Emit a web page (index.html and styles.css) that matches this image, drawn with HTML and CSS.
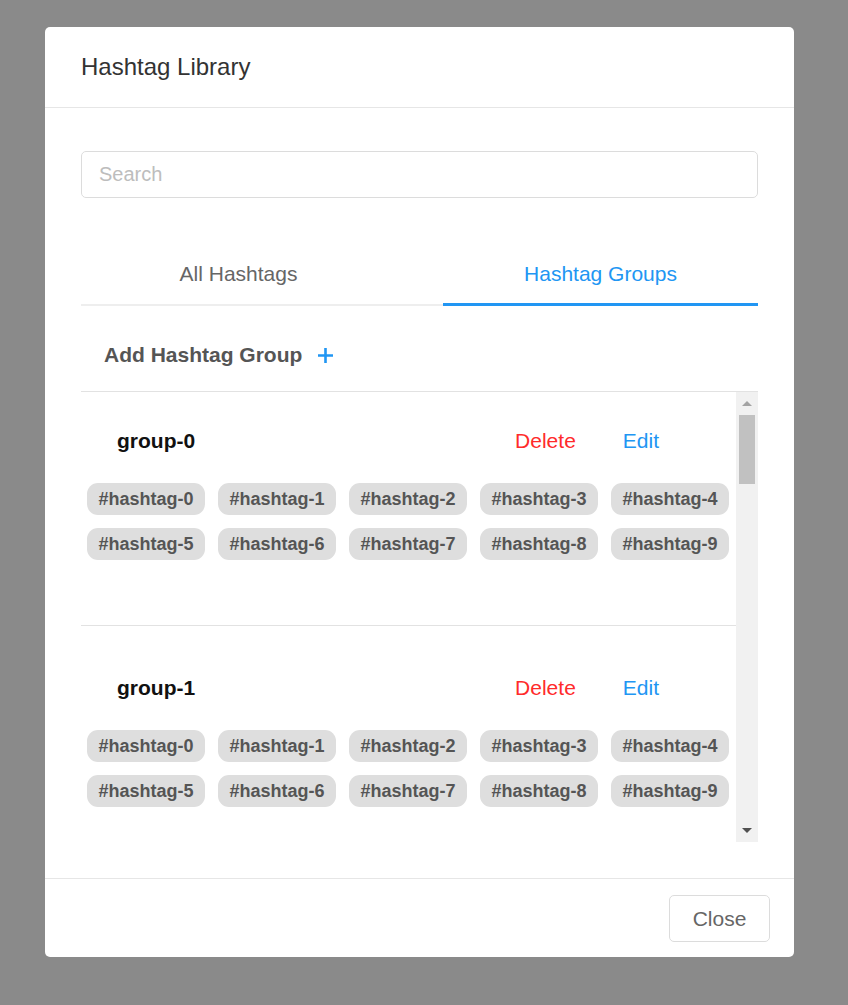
FILE: index.html
```html
<!DOCTYPE html>
<html lang="en">
<head>
  <meta charset="UTF-8" />
  <meta name="viewport" content="width=device-width, initial-scale=1.0"/>
  <title>Hashtag Library</title>
  <link rel="stylesheet" href="styles.css">
</head>
<body>
  <div class="modal">
    <header class="modal-header">
      <h2>Hashtag Library</h2>
    </header>

    <section class="modal-body">
      <input type="text" class="search" placeholder="Search" />

      <nav class="tabs">
        <div class="tab">All Hashtags</div>
        <div class="tab active">Hashtag Groups</div>
      </nav>

      <div class="add-group">
        <span>Add Hashtag Group</span>
        <svg class="plus" width="17" height="17" viewBox="0 0 17 17">
          <path d="M8.5 1v15M1 8.5h15" stroke="#2196f3" stroke-width="2.6" fill="none"/>
        </svg>
      </div>

      <div class="group-scroller">
        <div class="group-list">
          <div class="group">
            <div class="group-header">
              <span class="group-name">group-0</span>
              <span class="delete-link">Delete</span>
              <span class="edit-link">Edit</span>
            </div>
            <div class="chips">
              <span class="chip">#hashtag-0</span>
              <span class="chip">#hashtag-1</span>
              <span class="chip">#hashtag-2</span>
              <span class="chip">#hashtag-3</span>
              <span class="chip">#hashtag-4</span>
              <span class="chip">#hashtag-5</span>
              <span class="chip">#hashtag-6</span>
              <span class="chip">#hashtag-7</span>
              <span class="chip">#hashtag-8</span>
              <span class="chip">#hashtag-9</span>
            </div>
          </div>
          <div class="group">
            <div class="group-header">
              <span class="group-name">group-1</span>
              <span class="delete-link">Delete</span>
              <span class="edit-link">Edit</span>
            </div>
            <div class="chips">
              <span class="chip">#hashtag-0</span>
              <span class="chip">#hashtag-1</span>
              <span class="chip">#hashtag-2</span>
              <span class="chip">#hashtag-3</span>
              <span class="chip">#hashtag-4</span>
              <span class="chip">#hashtag-5</span>
              <span class="chip">#hashtag-6</span>
              <span class="chip">#hashtag-7</span>
              <span class="chip">#hashtag-8</span>
              <span class="chip">#hashtag-9</span>
            </div>
          </div>
        </div>

        <div class="scrollbar">
          <div class="scroll-btn up"></div>
          <div class="scroll-track">
            <div class="scroll-thumb"></div>
          </div>
          <div class="scroll-btn down"></div>
        </div>
      </div>
    </section>

    <footer class="modal-footer">
      <button class="close-btn">Close</button>
    </footer>
  </div>
</body>
</html>
```

FILE: styles.css
```css
body {
  margin: 0;
  font-family: 'Liberation Sans', Arial, sans-serif;
  background-color: #8a8a8a;
  height: 100vh;
}

.modal {
  margin: 27px 0 0 45px;
  width: 749px;
  height: 930px;
  background-color: #fff;
  border-radius: 5px;
  display: flex;
  flex-direction: column;
  overflow: hidden;
}

.modal-header {
  flex-shrink: 0;
  height: 80px;
  padding: 0 36px;
  display: flex;
  align-items: center;
  border-bottom: 1px solid #e6e6e6;
}

.modal-header h2 {
  margin: 0;
  font-size: 24px;
  font-weight: normal;
  color: #333;
}

.modal-body {
  flex-shrink: 0;
  padding: 43px 36px 36px;
  border-bottom: 1px solid #e6e6e6;
}

.search {
  display: block;
  box-sizing: border-box;
  width: 100%;
  height: 47px;
  padding: 0 17px;
  font-family: inherit;
  font-size: 20px;
  color: #333;
  border: 1px solid #dcdcdc;
  border-radius: 5px;
  outline: none;
}

.search::placeholder {
  color: #bdbdbd;
}

.tabs {
  margin-top: 47px;
  display: flex;
  justify-content: space-between;
  border-bottom: 2px solid #eeeeee;
}

.tab {
  width: 315px;
  line-height: 58px;
  text-align: center;
  font-size: 21px;
  color: #666;
  border-bottom: 3px solid transparent;
  margin-bottom: -2px;
  cursor: pointer;
}

.tab.active {
  color: #2196f3;
  border-bottom-color: #2196f3;
}

.add-group {
  height: 72px;
  padding: 13px 0 0 23px;
  display: flex;
  align-items: center;
  gap: 15px;
  font-size: 21px;
  font-weight: bold;
  color: #555;
  border-bottom: 1px solid #e2e2e2;
}

.group-scroller {
  height: 450px;
  display: flex;
}

.group-list {
  flex-grow: 1;
  overflow: hidden;
}

.group {
  padding: 47px 0 65px;
  border-bottom: 1px solid #e2e2e2;
}

.group:first-child {
  padding-top: 34px;
}

.group-header {
  height: 30px;
  padding: 0 77px 0 36px;
  display: flex;
  align-items: center;
  gap: 47px;
  font-size: 21px;
}

.group-name {
  flex-grow: 1;
  font-weight: bold;
  color: #111;
}

.delete-link {
  color: #ff2b2b;
  cursor: pointer;
}

.edit-link {
  color: #2196f3;
  cursor: pointer;
}

.chips {
  margin-top: 27px;
  padding-left: 6px;
  display: flex;
  flex-wrap: wrap;
  gap: 13px;
}

.chip {
  width: 118px;
  height: 32px;
  line-height: 32px;
  text-align: center;
  font-size: 18px;
  font-weight: bold;
  color: #555;
  background-color: #dedede;
  border-radius: 11px;
}

/* fake scrollbar, same look as the classic one */
.scrollbar {
  width: 22px;
  flex-shrink: 0;
  background-color: #f1f1f1;
  display: flex;
  flex-direction: column;
}

.scroll-btn {
  height: 23px;
  display: flex;
  align-items: center;
  justify-content: center;
}

.scroll-btn::before {
  content: "";
  border-left: 5px solid transparent;
  border-right: 5px solid transparent;
}

.scroll-btn.up::before {
  border-bottom: 5px solid #a3a3a3;
}

.scroll-btn.down::before {
  border-top: 5px solid #505050;
}

.scroll-track {
  flex-grow: 1;
  padding: 0 3px;
}

.scroll-thumb {
  height: 69px;
  background-color: #c1c1c1;
}

.modal-footer {
  flex-grow: 1;
  padding: 16px 24px;
  display: flex;
  justify-content: flex-end;
  align-items: flex-start;
}

.close-btn {
  width: 101px;
  height: 47px;
  font-family: inherit;
  font-size: 21px;
  color: #666;
  background-color: #fff;
  border: 1px solid #dcdcdc;
  border-radius: 5px;
  cursor: pointer;
}
```
